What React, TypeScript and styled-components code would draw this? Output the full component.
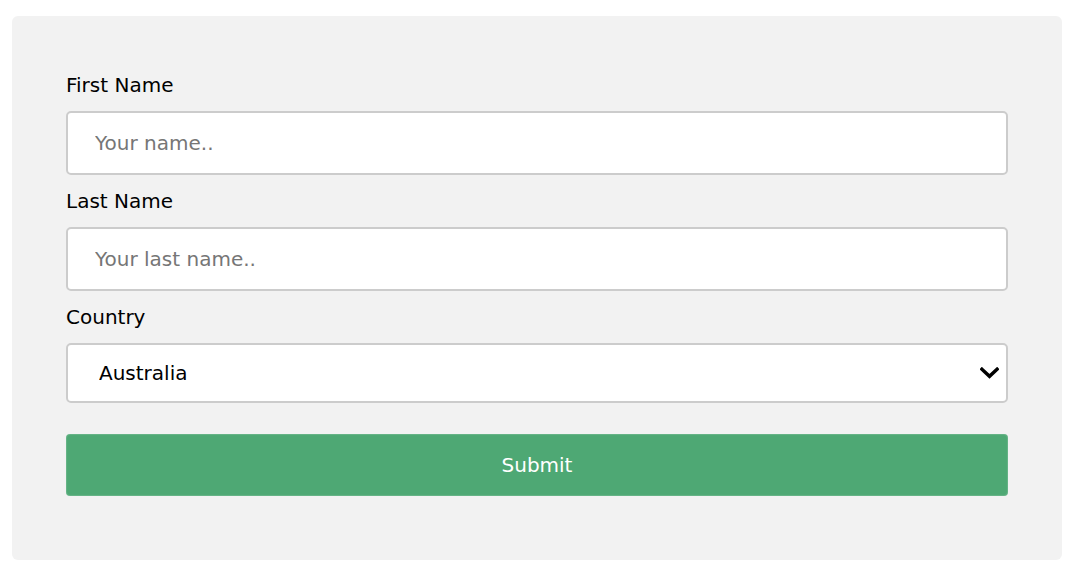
import styled, { createGlobalStyle } from 'styled-components';

const GlobalStyle = createGlobalStyle`
    html, body {
        margin: 0;
        padding: 0;
        background: #ffffff;
    }
    body {
        font-family: 'DejaVu Sans', Verdana, sans-serif;
    }
`;

export default function App() {
    return (
        <>
            <GlobalStyle />
            <Page>
                <FormCard>
                    <form onSubmit={(e) => e.preventDefault()}>
                        <FieldLabel htmlFor="fname">First Name</FieldLabel>
                        <TextInput id="fname" name="firstname" placeholder="Your name.." />

                        <FieldLabel htmlFor="lname">Last Name</FieldLabel>
                        <TextInput id="lname" name="lastname" placeholder="Your last name.." />

                        <FieldLabel htmlFor="country">Country</FieldLabel>
                        <SelectWrap>
                            <CountrySelect id="country" name="country" defaultValue="australia">
                                <option value="australia">Australia</option>
                                <option value="canada">Canada</option>
                                <option value="usa">USA</option>
                            </CountrySelect>
                            <Chevron viewBox="0 0 20 12" aria-hidden="true">
                                <path d="M2 2 L10 9.5 L18 2" />
                            </Chevron>
                        </SelectWrap>

                        <SubmitButton type="submit">Submit</SubmitButton>
                    </form>
                </FormCard>
            </Page>
        </>
    );
}

const Page = styled.div`
    padding: 16px 12px 12px;
`;

const FormCard = styled.div`
    background: #f2f2f2;
    border-radius: 6px;
    padding: 57px 54px 64px;
    box-sizing: border-box;
    height: 544px;
`;

const FieldLabel = styled.label`
    display: block;
    font-size: 20px;
    line-height: 24px;
    color: #000;
    margin: 0 0 14px;
`;

const TextInput = styled.input`
    display: block;
    width: 100%;
    height: 64px;
    box-sizing: border-box;
    margin: 0 0 14px;
    padding: 0 27px;
    border: 2px solid #cccccc;
    border-radius: 5px;
    background: #fff;
    font-family: inherit;
    font-size: 20px;
    color: #000;
    outline: none;

    &::placeholder {
        color: #767676;
    }
`;

const SelectWrap = styled.div`
    position: relative;
    margin: 0 0 31px;
`;

const CountrySelect = styled.select`
    display: block;
    width: 100%;
    height: 60px;
    box-sizing: border-box;
    padding: 0 40px 0 31px;
    border: 2px solid #cccccc;
    border-radius: 5px;
    background: #fff;
    font-family: inherit;
    font-size: 20px;
    color: #000;
    appearance: none;
    outline: none;
`;

const Chevron = styled.svg`
    position: absolute;
    right: 9px;
    top: 24px;
    width: 19px;
    height: 12px;
    pointer-events: none;

    path {
        fill: none;
        stroke: #000;
        stroke-width: 3.6;
        stroke-linecap: square;
        stroke-linejoin: miter;
    }
`;

const SubmitButton = styled.button`
    display: block;
    width: 100%;
    height: 62px;
    border: none;
    border-radius: 4px;
    background: #4ea874;
    box-shadow: inset 0 0 1px 1px rgba(255, 255, 255, 0.15);
    color: #fff;
    font-family: inherit;
    font-size: 20px;
    cursor: pointer;
`;
